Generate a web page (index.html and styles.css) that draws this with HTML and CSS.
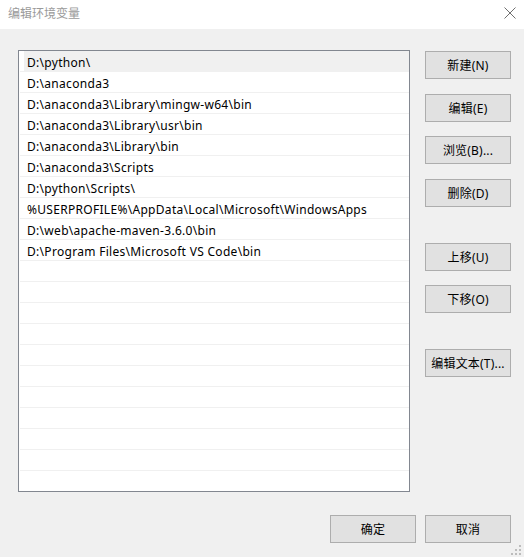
FILE: index.html
```html
<!DOCTYPE html>
<html lang="zh-CN">
<head>
<meta charset="utf-8">
<title>编辑环境变量</title>
<link rel="stylesheet" href="styles.css">
</head>
<body>
<div class="dialog">
  <header class="titlebar">
    <span class="title">编辑环境变量</span>
    <span class="close" aria-label="关闭">
      <svg width="12" height="12" viewBox="0 0 12 12"><path d="M0.5 0.5L11.5 11.5M11.5 0.5L0.5 11.5" stroke="#6f6f6f" stroke-width="1" fill="none"/></svg>
    </span>
  </header>
  <main class="body">
    <div class="main-row">
      <div class="list">
        <div class="row sel">D:\python\</div>
        <div class="row">D:\anaconda3</div>
        <div class="row">D:\anaconda3\Library\mingw-w64\bin</div>
        <div class="row">D:\anaconda3\Library\usr\bin</div>
        <div class="row">D:\anaconda3\Library\bin</div>
        <div class="row">D:\anaconda3\Scripts</div>
        <div class="row">D:\python\Scripts\</div>
        <div class="row">%USERPROFILE%\AppData\Local\Microsoft\WindowsApps</div>
        <div class="row">D:\web\apache-maven-3.6.0\bin</div>
        <div class="row">D:\Program Files\Microsoft VS Code\bin</div>
        <div class="row"></div>
        <div class="row"></div>
        <div class="row"></div>
        <div class="row"></div>
        <div class="row"></div>
        <div class="row"></div>
        <div class="row"></div>
        <div class="row"></div>
        <div class="row"></div>
        <div class="row"></div>
        <div class="row"></div>
      </div>
      <div class="side">
        <button class="btn">新建(N)</button>
        <button class="btn step">编辑(E)</button>
        <button class="btn">浏览(B)...</button>
        <button class="btn step">删除(D)</button>
        <button class="btn group">上移(U)</button>
        <button class="btn">下移(O)</button>
        <button class="btn group">编辑文本(T)...</button>
      </div>
    </div>
    <div class="actions">
      <button class="btn">确定</button>
      <button class="btn">取消</button>
    </div>
  </main>
  <svg class="grip" width="11" height="11" viewBox="0 0 11 11">
    <rect x="8" y="0" width="2" height="2" fill="#bcbcbc"/>
    <rect x="4" y="4" width="2" height="2" fill="#bcbcbc"/>
    <rect x="8" y="4" width="2" height="2" fill="#bcbcbc"/>
    <rect x="0" y="8" width="2" height="2" fill="#bcbcbc"/>
    <rect x="4" y="8" width="2" height="2" fill="#bcbcbc"/>
    <rect x="8" y="8" width="2" height="2" fill="#bcbcbc"/>
  </svg>
</div>
</body>
</html>
```
FILE: styles.css
```css
html, body {
  margin: 0;
  padding: 0;
}

body {
  font-family: "Noto Sans", "Noto Sans CJK SC", sans-serif;
  font-size: 12px;
  color: #000;
  background: #f0f0f0;
}

.dialog {
  position: relative;
  width: 524px;
  height: 557px;
  background: #f0f0f0;
  overflow: hidden;
}

.titlebar {
  height: 29px;
  background: #fff;
  display: flex;
  align-items: center;
  justify-content: space-between;
  padding: 0 7px 0 8px;
  box-sizing: border-box;
}

.title {
  color: #9a9a9a;
  font-size: 12px;
  line-height: 16px;
  margin-top: -1px;
}

.close {
  display: flex;
  width: 12px;
  height: 12px;
  margin-top: -4px;
  margin-right: 1px;
}

.body {
  padding: 21px 13px 0 18px;
}

.main-row {
  display: flex;
  gap: 15px;
}

.list {
  width: 390px;
  height: 440px;
  border: 1px solid #828790;
  background: #fff;
  overflow: hidden;
}

.row {
  height: 20px;
  line-height: 23px;
  margin-left: 1px;
  padding-left: 7px;
  border-bottom: 1px solid #f0f0f0;
  white-space: nowrap;
  letter-spacing: 0.3px;
}

.row.sel {
  background: linear-gradient(to right, transparent 4px, #f0f0f0 4px);
}

.side {
  display: flex;
  flex-direction: column;
  gap: 14px;
  padding-top: 1px;
}

.btn {
  width: 86px;
  height: 28px;
  margin: 0;
  padding: 2px 0 0;
  background: #e1e1e1;
  border: 1px solid #adadad;
  font-family: inherit;
  font-size: 12px;
  color: #000;
  line-height: 24px;
  text-align: center;
  letter-spacing: 0.2px;
}

.side .step {
  margin-top: 1px;
}

.side .group {
  margin-top: 22px;
}

.actions {
  display: flex;
  justify-content: flex-end;
  gap: 9px;
  margin-top: 23px;
}

.grip {
  position: absolute;
  right: 2px;
  bottom: 1px;
}
```
